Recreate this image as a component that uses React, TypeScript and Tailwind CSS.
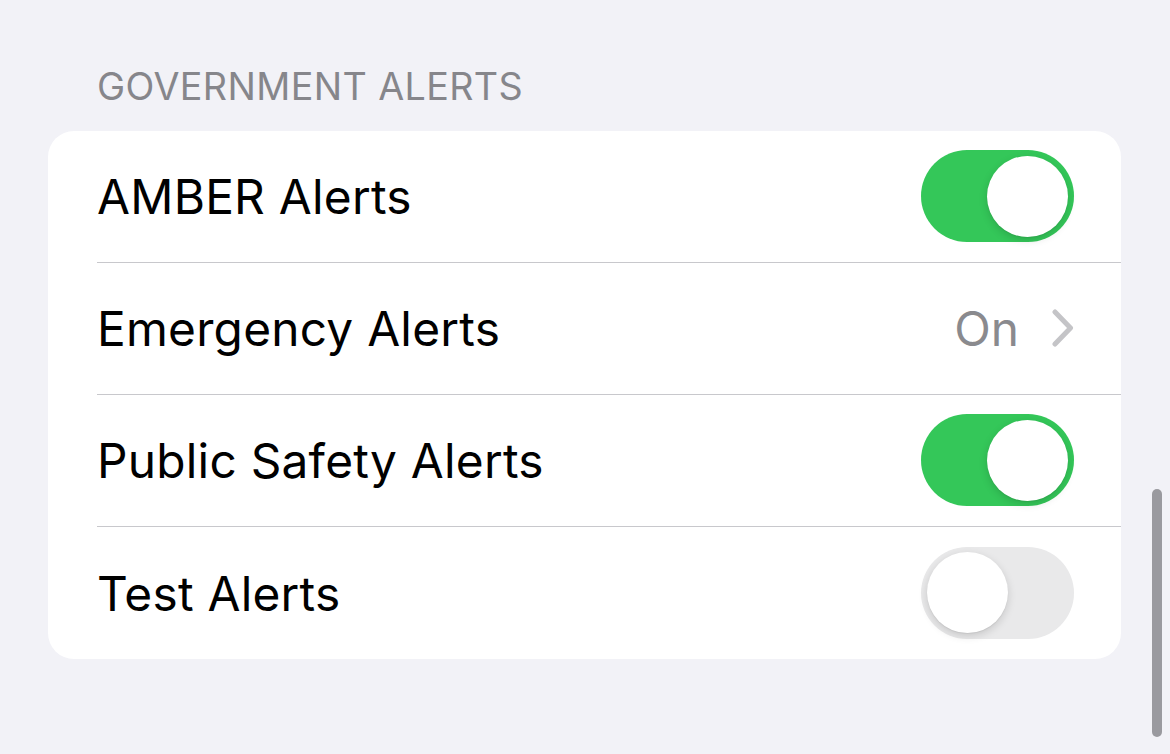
import React from "react";

type Row =
  | { label: string; kind: "toggle"; on: boolean }
  | { label: string; kind: "link"; value: string };

const rows: Row[] = [
  { label: "AMBER Alerts", kind: "toggle", on: true },
  { label: "Emergency Alerts", kind: "link", value: "On" },
  { label: "Public Safety Alerts", kind: "toggle", on: true },
  { label: "Test Alerts", kind: "toggle", on: false },
];

function Toggle({ on }: { on: boolean }) {
  return (
    <div
      className={`flex items-center w-[153px] h-[92px] rounded-full px-[6px] ${
        on ? "bg-[#34c759] justify-end" : "bg-[#e9e9ea] justify-start"
      }`}
    >
      <div className="w-[81px] h-[81px] rounded-full bg-white shadow-[0_3px_8px_rgba(0,0,0,0.15),0_1px_1px_rgba(0,0,0,0.06)]" />
    </div>
  );
}

function Chevron() {
  return (
    <svg width="22" height="38" viewBox="0 0 22 38" fill="none">
      <path
        d="M3 3 L18.5 19 L3 35"
        stroke="#c4c4c7"
        strokeWidth="5"
        strokeLinecap="round"
        strokeLinejoin="round"
      />
    </svg>
  );
}

export default function App() {
  return (
    <div
      className="relative w-[1170px] h-[754px] bg-[#f2f2f7] overflow-hidden"
      style={{ fontFamily: "Inter, 'Liberation Sans', sans-serif" }}
    >
      <div className="pt-[68px] pl-[97px] text-[37.7px] leading-none text-[#86868b] tracking-[0.01em]">
        GOVERNMENT ALERTS
      </div>

      <div className="mt-[25px] ml-[48px] w-[1073px] bg-white rounded-[26px] overflow-hidden">
        {rows.map((row, i) => (
          <div key={row.label} className="pl-[49px]">
            <div
              className={`flex items-center justify-between h-[132px] pr-[47px] ${
                i < rows.length - 1 ? "border-b border-[#c8c8cc]" : ""
              }`}
            >
              <span className="pt-[4px] text-[47.8px] text-black tracking-[0.005em]">{row.label}</span>
              {row.kind === "toggle" ? (
                <Toggle on={row.on} />
              ) : (
                <div className="flex items-center gap-[33px]">
                  <span className="pt-[4px] text-[47.8px] text-[#8a8a8e]">{row.value}</span>
                  <Chevron />
                </div>
              )}
            </div>
          </div>
        ))}
      </div>

      {/* scroll indicator */}
      <div className="absolute left-[1152px] top-[489px] w-[10px] h-[248px] rounded-full bg-[#9a9a9f]" />
    </div>
  );
}
